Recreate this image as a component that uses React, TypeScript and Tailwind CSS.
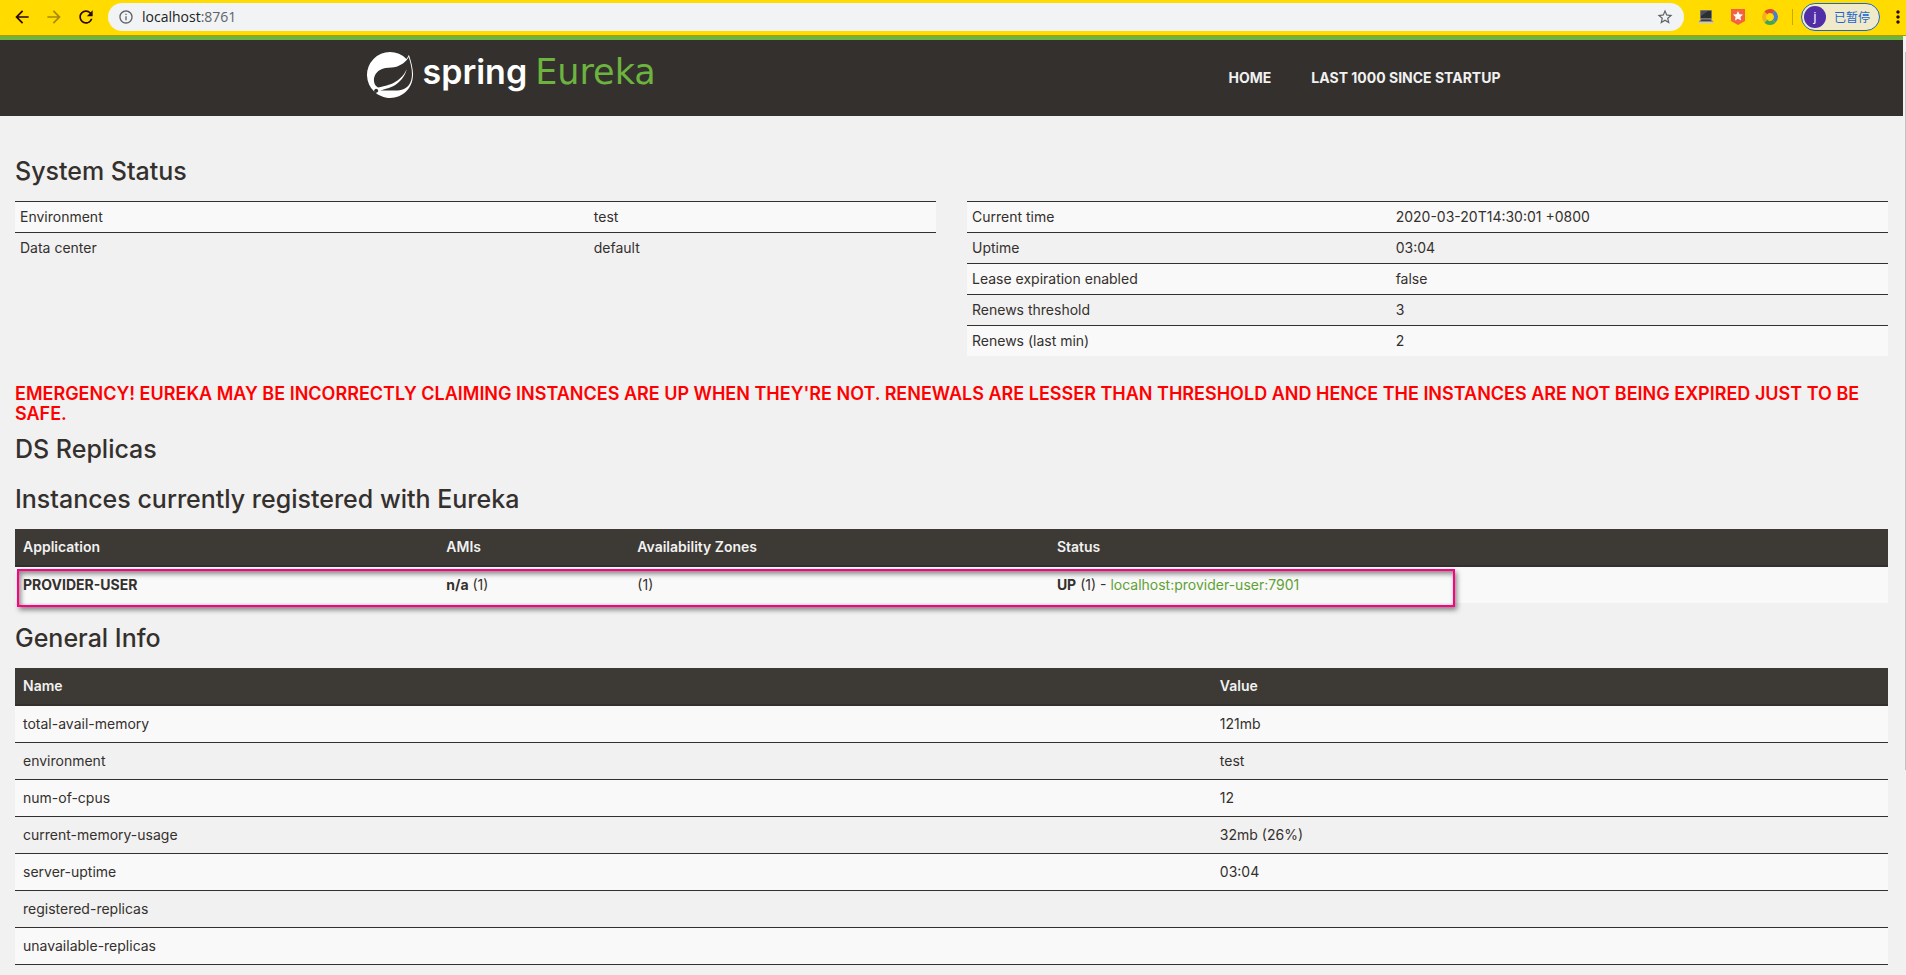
import { SiSpring } from 'react-icons/si';
import { MdArrowBack, MdArrowForward, MdRefresh, MdInfoOutline, MdStarBorder, MdMoreVert } from 'react-icons/md';

const environmentRows = [
  ['Environment', 'test'],
  ['Data center', 'default'],
];

const statusRows = [
  ['Current time', '2020-03-20T14:30:01 +0800'],
  ['Uptime', '03:04'],
  ['Lease expiration enabled', 'false'],
  ['Renews threshold', '3'],
  ['Renews (last min)', '2'],
];

const generalInfo = [
  ['total-avail-memory', '121mb'],
  ['environment', 'test'],
  ['num-of-cpus', '12'],
  ['current-memory-usage', '32mb (26%)'],
  ['server-uptime', '03:04'],
  ['registered-replicas', ''],
  ['unavailable-replicas', ''],
];

function LaptopIcon() {
  return (
    <svg viewBox="0 0 16 16" className="size-4">
      <rect x="2" y="1" width="12" height="9" rx="1" fill="#77756a" />
      <rect x="3" y="2" width="10" height="7" fill="#2b2e33" />
      <path d="M3 2h7L3 7z" fill="#4a4e55" />
      <path d="M2.500 10h11l2 3.500H.5z" fill="#8b8c88" />
      <path d="M3.500 10.500h9l.8 1.500H2.700z" fill="#3a3c3f" />
      <path d="M.5 13h15v1.500H.5z" fill="#c9c9c4" />
    </svg>
  );
}

function ShieldIcon() {
  return (
    <svg viewBox="0 0 16 16" className="size-4">
      <path d="M1 0h14v12L8 16l-7-4z" fill="#f4623f" />
      <path d="M8 2l1.500 3.200 3.500.4-2.600 2.400.7 3.500L8 9.800l-3.100 1.700.7-3.500L3 5.600l3.500-.4z" fill="#fff" />
    </svg>
  );
}

function RingIcon() {
  return (
    <svg viewBox="0 0 16 16" className="size-4" fill="none" strokeWidth="4">
      <path d="M3.800 12.200A6 6 0 0 1 3.800 3.800" stroke="#f0b020" />
      <path d="M3.800 3.800A6 6 0 0 1 11.500 3.100" stroke="#e2483a" />
      <path d="M11.500 3.100A6 6 0 0 1 12.200 12.200" stroke="#4a7fc9" />
      <path d="M12.200 12.200A6 6 0 0 1 3.800 12.200" stroke="#43a556" />
    </svg>
  );
}

function BrowserBar() {
  return (
    <div className="flex h-9 items-center border-b border-[#b39a00] bg-[#ffdb00] pb-px pl-3 text-[#2a0a00]">
      <button aria-label="Back" className="flex w-5 justify-center">
        <MdArrowBack className="size-5" />
      </button>
      <button aria-label="Forward" className="ml-3 flex w-5 justify-center text-[#a68a0a]">
        <MdArrowForward className="size-5" />
      </button>
      <button aria-label="Reload" className="ml-3 flex w-5 justify-center">
        <MdRefresh className="size-5" />
      </button>
      <div className="ml-3 flex h-7 flex-1 items-center rounded-full bg-[#f1f3f4] px-2.5 text-[#5f6368]">
        <MdInfoOutline className="size-4" />
        <span className="ml-2 flex-1 font-['Open_Sans',sans-serif] text-sm">
          <span className="text-[#202124]">localhost</span>:8761
        </span>
        <button aria-label="Bookmark">
          <MdStarBorder className="size-[18px]" />
        </button>
      </div>
      <div className="ml-3.5 flex items-center gap-4">
        <LaptopIcon />
        <ShieldIcon />
        <RingIcon />
      </div>
      <div className="ml-3.5 h-4 w-px bg-[#c9a800]" />
      <button className="ml-2 flex h-7 w-[79px] items-center rounded-full border border-[#1a66d0] bg-[#f0eacb] pl-0.5 font-['Noto_Sans_CJK_SC',sans-serif] text-xs text-[#1a66d0]">
        <span className="mr-2 flex size-[22px] items-center justify-center rounded-full bg-[#512da8] font-['Roboto',sans-serif] text-white">
          j
        </span>
        已暂停
      </button>
      <button aria-label="Menu" className="ml-2.5 flex w-4 justify-center">
        <MdMoreVert className="size-5 shrink-0" />
      </button>
    </div>
  );
}

function Navbar() {
  return (
    <header className="h-20 border-t-4 border-[#6db33f] bg-[#34302d]">
      <div className="mx-auto flex h-full max-w-[1170px] justify-between pr-4">
        <a href="#" className="flex items-center pb-1.5">
          <SiSpring className="size-[46px] text-white" />
          <span className="ml-2.5 flex items-baseline gap-2 pb-1.5 leading-none">
            <span className="font-['Inter',sans-serif] text-[34px] font-semibold text-white">spring</span>
            <span className="font-['DejaVu_Sans',sans-serif] text-[35px] text-[#6db33f]">Eureka</span>
          </span>
        </a>
        <nav className="flex items-center gap-10 pr-5 font-['Inter',sans-serif] text-sm font-bold text-[#f1f1f1]">
          <a href="#">HOME</a>
          <a href="#">LAST 1000 SINCE STARTUP</a>
        </nav>
      </div>
    </header>
  );
}

function Heading({ children }: { children: string }) {
  return <h1 className="text-[25px] leading-7 font-medium">{children}</h1>;
}

function StatusTable({ rows, nameWidth }: { rows: string[][]; nameWidth: string }) {
  return (
    <table className="w-full table-fixed">
      <tbody>
        {rows.map(([name, value]) => (
          <tr key={name} className="border-t border-[#34302d] odd:bg-[#f9f9f9]">
            <td className={`${nameWidth} p-[5px]`}>{name}</td>
            <td className="p-[5px]">{value}</td>
          </tr>
        ))}
      </tbody>
    </table>
  );
}

export default function App() {
  return (
    <div className="flex min-h-screen flex-col bg-[#f1f1f1] text-[#34302d]">
      <BrowserBar />
      <div className="flex flex-1">
        <div className="min-w-0 flex-1">
          <Navbar />
          <main className="px-[15px] pt-[41px] font-['Inter',sans-serif] text-sm">
            <Heading>System Status</Heading>
            <div className="mt-4 grid grid-cols-2 items-start gap-[31px]">
              <StatusTable rows={environmentRows} nameWidth="w-[62.3%]" />
              <StatusTable rows={statusRows} nameWidth="w-[46%]" />
            </div>

            <h4 className="mt-7 text-lg leading-5 font-semibold text-[#ff0000]">
              EMERGENCY! EUREKA MAY BE INCORRECTLY CLAIMING INSTANCES ARE UP WHEN THEY&apos;RE NOT. RENEWALS ARE LESSER
              THAN THRESHOLD AND HENCE THE INSTANCES ARE NOT BEING EXPIRED JUST TO BE SAFE.
            </h4>

            <div className="mt-[11px]">
              <Heading>DS Replicas</Heading>
            </div>
            <div className="mt-[22px]">
              <Heading>Instances currently registered with Eureka</Heading>
            </div>

            <div className="relative mt-4">
              <table className="w-full table-fixed text-left">
                <thead>
                  <tr className="border-b-2 border-[#34302d] bg-[#3d3934] text-[#f1f1f1]">
                    <th className="w-[22.6%] p-2 font-semibold">Application</th>
                    <th className="w-[10.2%] p-2 font-semibold">AMIs</th>
                    <th className="w-[22.4%] p-2 font-semibold">Availability Zones</th>
                    <th className="p-2 font-semibold">Status</th>
                  </tr>
                </thead>
                <tbody>
                  <tr className="bg-[#f9f9f9]">
                    <td className="p-2 font-bold">PROVIDER-USER</td>
                    <td className="p-2">
                      <b>n/a</b> (1)
                    </td>
                    <td className="p-2">(1)</td>
                    <td className="p-2">
                      <b>UP</b> (1) -{' '}
                      <a href="#" className="text-[#5fa134]">
                        localhost:provider-user:7901
                      </a>
                    </td>
                  </tr>
                </tbody>
              </table>
              {/* highlight frame around the registered instance */}
              <div className="pointer-events-none absolute top-10 left-0.5 h-[38px] w-[76.8%] border-2 border-[#ff0080] shadow-[2px_3px_5px_rgba(0,0,0,0.45),inset_2px_3px_5px_rgba(0,0,0,0.45)]" />
            </div>

            <div className="mt-[21px]">
              <Heading>General Info</Heading>
            </div>
            <table className="mt-4 w-full table-fixed text-left">
              <thead>
                <tr className="border-b-2 border-[#34302d] bg-[#3d3934] text-[#f1f1f1]">
                  <th className="w-[63.9%] p-2 font-semibold">Name</th>
                  <th className="p-2 font-semibold">Value</th>
                </tr>
              </thead>
              <tbody>
                {generalInfo.map(([name, value]) => (
                  <tr key={name} className="border-b border-[#34302d] odd:bg-[#f9f9f9]">
                    <td className="p-2">{name}</td>
                    <td className="p-2">{value}</td>
                  </tr>
                ))}
              </tbody>
            </table>
          </main>
        </div>
        {/* scrollbar */}
        <div className="w-[3px] bg-[#f1f1f1] pt-4">
          <div className="ml-auto h-[718px] w-px bg-[#c1c1c1]" />
        </div>
      </div>
    </div>
  );
}
